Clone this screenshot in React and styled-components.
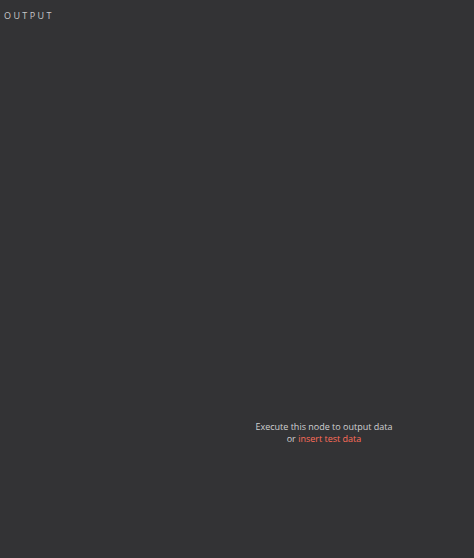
import { createGlobalStyle, styled } from 'styled-components';

const GlobalStyle = createGlobalStyle`
  html, body {
    margin: 0;
    padding: 0;
    background: #333335;
  }
  #root {
    height: 100vh;
  }
`;

const Panel = styled.div`
  display: flex;
  flex-direction: column;
  height: 558px;
  background: #333335;
  font-family: 'Open Sans', sans-serif;
`;

const Header = styled.div`
  padding: 9px 4px 0 4px;
  height: 20px;
  font-size: 9px;
  letter-spacing: 2.4px;
  color: #c8c8ca;
`;

const Body = styled.div`
  flex: 1;
  display: flex;
  flex-direction: column;
  align-items: center;
  justify-content: center;
  padding: 278px 0 0 174px;
  box-sizing: border-box;
`;

const Message = styled.div`
  font-size: 9px;
  line-height: 12px;
  color: #d0d0d2;
  text-align: center;
`;

const Link = styled.a`
  color: #ff6d5a;
  cursor: pointer;
`;

export default function App() {
  return (
    <>
      <GlobalStyle />
      <Panel>
        <Header>OUTPUT</Header>
        <Body>
          <Message>
            Execute this node to output data
            <br />
            or <Link>insert test data</Link>
          </Message>
        </Body>
      </Panel>
    </>
  );
}
